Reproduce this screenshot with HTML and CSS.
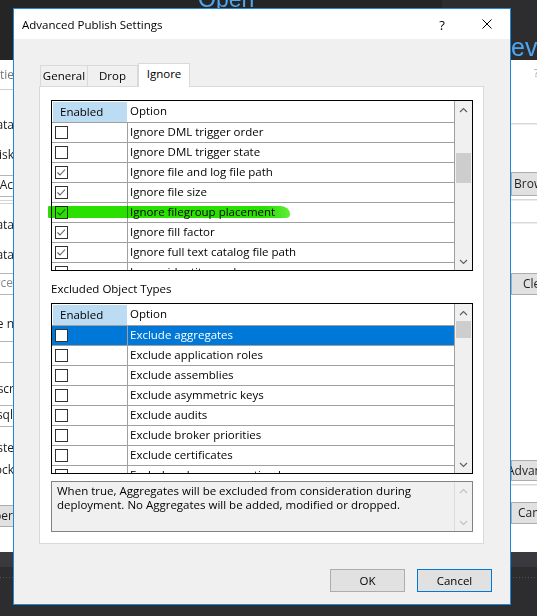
FILE: index.html
```html
<!DOCTYPE html>
<html>
<head>
<meta charset="utf-8">
<title>Advanced Publish Settings</title>
<link rel="stylesheet" href="styles.css">
</head>
<body>
<div class="app">
  <header class="app-top">
    <div class="top-left"><span class="hero hero-open">Open</span></div>
    <div class="top-right"><span class="hero hero-dev">Developer</span></div>
  </header>
  <main class="app-main">
    <div class="strip strip-left">
      <div class="l-tab">Propertie</div>
      <div class="l-label l-m20">Target data</div>
      <div class="l-label">Risk</div>
      <div class="l-input l-m5">C:\Ac</div>
      <div class="l-sep"></div>
      <div class="l-label l-m6">Data</div>
      <div class="l-label">Data</div>
      <div class="l-input l-m3 l-gray">Source</div>
      <div class="l-label l-m14">Profile n</div>
      <div class="l-input l-m2"></div>
      <div class="l-label l-m11">Publish scr</div>
      <div class="l-input l-m1">database.sql</div>
      <div class="l-label l-short l-m11">Registe</div>
      <div class="l-label l-short l-m2">Block</div>
      <div class="l-btn">Proper</div>
    </div>
    <div class="app-center"></div>
    <div class="strip strip-right">
      <div class="r-top">?</div>
      <div class="r-line r-m33"></div>
      <div class="r-btn r-brow">Browse...</div>
      <div class="r-line r-m3"></div>
      <div class="r-line r-m22"></div>
      <div class="r-btn r-cle">Clear</div>
      <div class="r-btn r-adv">Advanced...</div>
      <div class="r-line r-m4"></div>
      <div class="r-btn r-ca">Cancel</div>
    </div>
  </main>
  <footer class="app-bottom"><div class="dots"></div></footer>
</div>

<div class="dialog">
  <div class="titlebar">
    <span class="title">Advanced Publish Settings</span>
    <span class="tb-btn tb-help">?</span>
    <span class="tb-btn tb-close"><svg width="10" height="10" viewBox="0 0 10 10"><path d="M0.5 0.5 L9.5 9.5 M9.5 0.5 L0.5 9.5" stroke="#000" stroke-width="1" fill="none"/></svg></span>
  </div>
  <div class="dlg-body">
    <div class="tabs">
      <div class="tab tab-general">General</div>
      <div class="tab tab-drop">Drop</div>
      <div class="tab tab-ignore">Ignore</div>
    </div>
    <div class="panel">
      <div class="grid">
        <div class="grid-rows">
          <div class="grow grow-head"><div class="hcell">Enabled</div><div class="c2 head-opt">Option</div></div>
          <div class="grow"><div class="c1"><span class="cb"></span></div><div class="c2">Ignore DML trigger order</div></div>
          <div class="grow"><div class="c1"><span class="cb"></span></div><div class="c2">Ignore DML trigger state</div></div>
          <div class="grow"><div class="c1"><span class="cb"><svg width="11" height="11" viewBox="0 0 11 11"><path d="M1.5 5.5 L4 8 L9 2.5" stroke="#5c5c5c" stroke-width="1.1" fill="none"/></svg></span></div><div class="c2">Ignore file and log file path</div></div>
          <div class="grow"><div class="c1"><span class="cb"><svg width="11" height="11" viewBox="0 0 11 11"><path d="M1.5 5.5 L4 8 L9 2.5" stroke="#5c5c5c" stroke-width="1.1" fill="none"/></svg></span></div><div class="c2">Ignore file size</div></div>
          <div class="grow"><div class="c1"><span class="cb"><svg width="11" height="11" viewBox="0 0 11 11"><path d="M1.5 5.5 L4 8 L9 2.5" stroke="#5c5c5c" stroke-width="1.1" fill="none"/></svg></span></div><div class="c2">Ignore filegroup placement</div></div>
          <div class="grow"><div class="c1"><span class="cb"><svg width="11" height="11" viewBox="0 0 11 11"><path d="M1.5 5.5 L4 8 L9 2.5" stroke="#5c5c5c" stroke-width="1.1" fill="none"/></svg></span></div><div class="c2">Ignore fill factor</div></div>
          <div class="grow"><div class="c1"><span class="cb"><svg width="11" height="11" viewBox="0 0 11 11"><path d="M1.5 5.5 L4 8 L9 2.5" stroke="#5c5c5c" stroke-width="1.1" fill="none"/></svg></span></div><div class="c2">Ignore full text catalog file path</div></div>
          <div class="grow"><div class="c1"><span class="cb"></span></div><div class="c2">Ignore identity seed</div></div>
        </div>
        <div class="vscroll">
          <div class="sb-arrow"><svg width="9" height="6" viewBox="0 0 9 6"><path d="M1 5 L4.5 1.5 L8 5" stroke="#606060" stroke-width="1.2" fill="none"/></svg></div>
          <div class="sb-track"><div class="sb-thumb thumb-1"></div></div>
          <div class="sb-arrow"><svg width="9" height="6" viewBox="0 0 9 6"><path d="M1 1 L4.5 4.5 L8 1" stroke="#606060" stroke-width="1.2" fill="none"/></svg></div>
        </div>
      </div>

      <div class="section-label">Excluded Object Types</div>

      <div class="grid">
        <div class="grid-rows">
          <div class="grow grow-head"><div class="hcell">Enabled</div><div class="c2 head-opt">Option</div></div>
          <div class="grow sel"><div class="c1"><span class="cb"></span></div><div class="c2">Exclude aggregates</div></div>
          <div class="grow"><div class="c1"><span class="cb"></span></div><div class="c2">Exclude application roles</div></div>
          <div class="grow"><div class="c1"><span class="cb"></span></div><div class="c2">Exclude assemblies</div></div>
          <div class="grow"><div class="c1"><span class="cb"></span></div><div class="c2">Exclude asymmetric keys</div></div>
          <div class="grow"><div class="c1"><span class="cb"></span></div><div class="c2">Exclude audits</div></div>
          <div class="grow"><div class="c1"><span class="cb"></span></div><div class="c2">Exclude broker priorities</div></div>
          <div class="grow"><div class="c1"><span class="cb"></span></div><div class="c2">Exclude certificates</div></div>
          <div class="grow"><div class="c1"><span class="cb"></span></div><div class="c2">Exclude column encryption keys</div></div>
        </div>
        <div class="vscroll">
          <div class="sb-arrow"><svg width="9" height="6" viewBox="0 0 9 6"><path d="M1 5 L4.5 1.5 L8 5" stroke="#606060" stroke-width="1.2" fill="none"/></svg></div>
          <div class="sb-track"><div class="sb-thumb thumb-2"></div></div>
          <div class="sb-arrow"><svg width="9" height="6" viewBox="0 0 9 6"><path d="M1 1 L4.5 4.5 L8 1" stroke="#606060" stroke-width="1.2" fill="none"/></svg></div>
        </div>
      </div>

      <div class="desc">
        <div class="desc-text">When true, Aggregates will be excluded from consideration during<br>deployment. No Aggregates will be added, modified or dropped.</div>
        <div class="vscroll vscroll-dis">
          <div class="sb-arrow"><svg width="9" height="6" viewBox="0 0 9 6"><path d="M1 5 L4.5 1.5 L8 5" stroke="#c2c2c2" stroke-width="1.2" fill="none"/></svg></div>
          <div class="sb-track"></div>
          <div class="sb-arrow"><svg width="9" height="6" viewBox="0 0 9 6"><path d="M1 1 L4.5 4.5 L8 1" stroke="#c2c2c2" stroke-width="1.2" fill="none"/></svg></div>
        </div>
      </div>
    </div>
    <div class="buttons">
      <button class="btn">OK</button>
      <button class="btn btn-default">Cancel</button>
    </div>
  </div>
</div>
<div class="marker"></div>
</body>
</html>
```
FILE: styles.css
```css
* { box-sizing: border-box; }
html, body { margin: 0; padding: 0; }
body {
  width: 537px;
  height: 616px;
  overflow: hidden;
  position: relative;
  background: #2d2d30;
  font-family: "Open Sans", "Liberation Sans", Arial, sans-serif;
  font-size: 11.5px;
  color: #000;
}

/* ---------- background application ---------- */
.app { display: flex; flex-direction: column; height: 616px; }
.app-top { height: 60px; display: flex; flex: none; }
.top-left { width: 442px; background: #252526; overflow: hidden; }
.top-right { flex: 1; background: #2d2d30; overflow: hidden; white-space: nowrap; }
.hero {
  display: block;
  font-family: "Liberation Sans", Arial, sans-serif;
  color: #4ea6ee;
  white-space: nowrap;
}
.hero-open { font-size: 23px; line-height: 24px; margin-top: -13px; padding-left: 198px; }
.hero-dev { font-size: 25px; line-height: 30px; margin-top: 32px; padding-left: 51px; }

.app-main { height: 492px; display: flex; background: #fff; flex: none; }
.app-center { flex: 1; }
.strip { overflow: hidden; white-space: nowrap; color: #1e1e1e; font-size: 12px; }
.strip-left { width: 14px; direction: rtl; }
.strip-right { width: 27px; }

.l-tab { height: 30px; line-height: 29px; border-bottom: 1px solid #cfcfcf; color: #777; }
.l-label { height: 30px; line-height: 30px; }
.l-short { height: 20px; line-height: 20px; }
.l-input { width: 150px; height: 22px; line-height: 18px; border: 1px solid #b5b5b5; }
.l-gray { color: #8a8a8a; }
.l-sep { height: 4px; margin-top: 3px; border-top: 1px solid #d4d4d4; border-bottom: 1px solid #d4d4d4; }
.l-btn { width: 80px; height: 22px; line-height: 20px; margin-top: 25px; border: 1px solid #adadad; background: #e1e1e1; }
.l-m1 { margin-top: 1px; }
.l-m2 { margin-top: 2px; }
.l-m3 { margin-top: 3px; }
.l-m5 { margin-top: 5px; }
.l-m6 { margin-top: 6px; }
.l-m11 { margin-top: 11px; }
.l-m14 { margin-top: 14px; }
.l-m20 { margin-top: 20px; }

.r-top { height: 30px; line-height: 26px; padding-left: 24px; color: #9a9a9a; font-size: 11px; }
.r-line { height: 2px; border-top: 1px solid #d8d8d8; border-bottom: 1px solid #ececec; }
.r-m3 { margin-top: 3px; }
.r-m4 { margin-top: 3px; }
.r-m22 { margin-top: 21px; }
.r-m33 { margin-top: 33px; }
.r-btn { width: 90px; margin-left: 1px; border: 1px solid #adadad; background: #e1e1e1; }
.r-brow { height: 24px; line-height: 22px; margin-top: 47px; padding-left: 2px; }
.r-cle { height: 22px; line-height: 20px; margin-top: 49px; padding-left: 11px; }
.r-adv { height: 21px; line-height: 20px; margin-top: 165px; text-indent: -5px; }
.r-ca { height: 22px; line-height: 20px; margin-top: 16px; padding-left: 6px; }

.app-bottom { flex: 1; background: #2d2d30; border-top: 15px solid #3a3a3e; }
.dots { margin-top: 10px; height: 1px; background: repeating-linear-gradient(90deg, #505055 0 1px, transparent 1px 3px); }

/* ---------- dialog ---------- */
.dialog {
  position: absolute;
  left: 13px;
  top: 8px;
  width: 498px;
  height: 597px;
  border: 1px solid #2086d7;
  background: #f0f0f0;
  display: flex;
  flex-direction: column;
}
.titlebar { height: 30px; flex: none; background: #fff; display: flex; align-items: center; }
.title { flex: 1; padding-left: 8px; white-space: nowrap; }
.tb-btn { width: 46px; height: 30px; display: flex; align-items: center; justify-content: center; }
.tb-help { font-size: 13px; padding-top: 1px; padding-left: 2px; }

.dlg-body { flex: 1; display: flex; flex-direction: column; padding: 24px 0 12px 0; }

.tabs { display: flex; align-items: flex-end; height: 23px; margin-left: 26px; flex: none; }
.tab {
  height: 21px;
  border: 1px solid #d9d9d9;
  border-bottom: none;
  background: #f0f0f0;
  text-align: center;
  line-height: 20px;
  white-space: nowrap;
}
.tab-general { width: 48px; }
.tab-drop { width: 50px; border-left: none; }
.tab-ignore {
  width: 52px;
  height: 24px;
  margin-bottom: -1px;
  background: #fff;
  position: relative;
  z-index: 1;
}

.panel {
  height: 458px;
  flex: none;
  margin: 0 26px 0 25px;
  background: #fff;
  border: 1px solid #d9d9d9;
  padding: 13px 10px 11px 11px;
  display: flex;
  flex-direction: column;
}

.grid { height: 171px; flex: none; border: 1px solid #000; display: flex; }
.grid-rows { flex: 1; border-right: 1px solid #a0a0a0; overflow: hidden; }
.grow { display: flex; height: 20px; border-top: 1px solid #a0a0a0; white-space: nowrap; }
.grow-head { height: 21px; border-top: none; padding-top: 1px; }
.hcell { width: 74px; margin: 0 1px; background: #bcdcf4; padding-left: 7px; line-height: 20px; flex: none; }
.head-opt { padding-left: 5px; line-height: 20px; }
.c1 { width: 76px; flex: none; border-right: 1px solid #a0a0a0; padding-left: 3px; display: flex; align-items: center; }
.c2 { flex: 1; padding-left: 2px; line-height: 18px; }
.sel { background: #0078d7; color: #fff; }
.cb { width: 13px; height: 13px; border: 1px solid #333; background: #fff; display: block; }
.cb svg { display: block; }

.vscroll { width: 17px; flex: none; background: #f0f0f0; display: flex; flex-direction: column; }
.sb-arrow { height: 17px; flex: none; display: flex; align-items: center; justify-content: center; }
.sb-arrow svg { display: block; }
.sb-track { flex: 1; }
.sb-thumb { margin-left: 1px; width: 15px; background: #cdcdcd; }
.thumb-1 { margin-top: 35px; height: 30px; }
.thumb-2 { margin-top: 0; height: 17px; }

.section-label { height: 32px; flex: none; padding-top: 10px; line-height: 16px; }

.desc { margin-top: 7px; height: 51px; flex: none; border: 1px solid #828282; background: #f0f0f0; display: flex; }
.desc-text { flex: 1; padding: 2px 0 0 5px; line-height: 14px; border-right: 1px solid #dcdcdc; white-space: nowrap; }

.buttons { display: flex; justify-content: flex-end; gap: 12px; margin-top: 25px; padding-right: 18px; flex: none; }
.btn {
  width: 75px;
  height: 23px;
  border: 1px solid #adadad;
  background: #e1e1e1;
  font: inherit;
  color: #000;
  padding: 0;
  margin: 0;
}
.btn-default { border-color: #0078d7; }

.marker {
  position: absolute;
  left: 48px;
  top: 206px;
  width: 242px;
  height: 12px;
  background: linear-gradient(90deg, #2ae000 0, #2ae000 90%, #62ec3a 100%);
  mix-blend-mode: multiply;
  border-radius: 1px 10px 4px 1px / 1px 8px 4px 1px;
}
```
